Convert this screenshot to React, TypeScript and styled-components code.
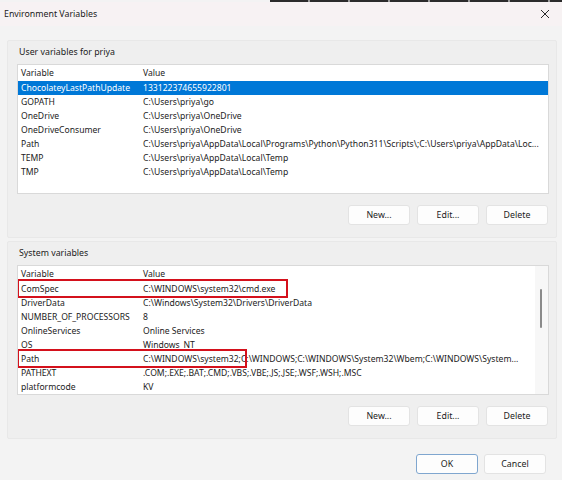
import React from "react";
import styled, {createGlobalStyle, css} from "styled-components";

const GlobalStyle = createGlobalStyle`
  html, body {
    margin: 0;
    padding: 0;
    background: #f3f3f3;
  }
  body {
    font-family: "Noto Sans", "Open Sans", sans-serif;
    font-size: 8.6px;
    color: #1b1b1b;
  }
`

const Window = styled.div`
  width: 562px;
  height: 480px;
  display: flex;
  flex-direction: column;
  background: #f3f3f3;
  overflow: hidden;
`

const TopStrip = styled.div`
  height: 2px;
  margin-left: 270px;
  background: repeating-linear-gradient(90deg, #2b2b2b 0 38px, #9a9a9a 38px 40px);
`

const TitleBar = styled.header`
  height: 24px;
  display: flex;
  flex-direction: row;
  justify-content: space-between;
  align-items: center;
  padding: 0 12px 0 4px;
  background: #f7f2f3;
`

const Title = styled.span`
  font-size: 8.8px;
  color: #1a1a1a;
`

const Body = styled.div`
  display: flex;
  flex-direction: column;
  gap: 3px;
  padding: 14px 5px 0 7px;
`

const Group = styled.section`
  display: flex;
  flex-direction: column;
  padding: 4px 7px 12px 9px;
  background: #efefef;
  border: 1px solid #e8e8e8;
  border-radius: 2px;
`

const GroupLabel = styled.div`
  height: 14px;
  line-height: 14px;
  margin-left: 2px;
  margin-bottom: 5px;
  font-size: 8.8px;
`

const ListBox = styled.div`
  position: relative;
  height: 130px;
  box-sizing: border-box;
  background: #ffffff;
  border: 1px solid #d9d9d9;
  overflow: hidden;
`

const HeaderRow = styled.div`
  display: flex;
  height: 16px;
  align-items: center;
  padding-left: 3px;
`

const Row = styled.div<{ $selected?: boolean }>`
  display: flex;
  height: 14px;
  align-items: center;
  padding-left: 3px;
  white-space: nowrap;
  ${({$selected}) => $selected && css`
    background: #0078d7;
    color: #ffffff;
  `}
`

const NameCell = styled.span`
  width: 122px;
  flex-shrink: 0;
`

const ValueCell = styled.span`
  white-space: nowrap;
`

const ScrollTrack = styled.div`
  position: absolute;
  top: 0;
  right: 0;
  width: 13px;
  height: 100%;
  background: #f7f7f7;
`

const ScrollThumb = styled.div`
  position: absolute;
  top: 23px;
  left: 5px;
  width: 2px;
  height: 39px;
  border-radius: 1px;
  background: #8a8a8a;
`

const ButtonRow = styled.div`
  display: flex;
  justify-content: flex-end;
  gap: 7px;
  margin-top: 11px;
  padding-right: 1px;
`

const Button = styled.button<{ $primary?: boolean }>`
  width: 62px;
  height: 20px;
  padding: 0;
  font-family: inherit;
  font-size: 8.8px;
  color: #1b1b1b;
  background: #fdfdfd;
  border: 1px solid #e3e3e3;
  border-radius: 3px;
  ${({$primary}) => $primary && css`
    border: 1px solid #7fa6cf;
  `}
`

const Footer = styled.div`
  display: flex;
  justify-content: flex-end;
  gap: 6px;
  padding: 15px 16px 0 0;
`

const RedBox = styled.div<{ $width: number }>`
  position: absolute;
  top: -3px;
  left: -1px;
  height: 19px;
  box-sizing: border-box;
  border: 2.5px solid #d4111c;
  width: ${({$width}) => $width}px;
`

const RowWrap = styled.div`
  position: relative;
`

const CloseIcon = () => (
  <svg width="10" height="10" viewBox="0 0 10 10">
    <path d="M1 1 L9 9 M9 1 L1 9" stroke="#2a2a2a" strokeWidth="1" fill="none"/>
  </svg>
)

type Variable = {
  name: string
  value: string
  selected?: boolean
  markWidth?: number
}

const userVariables: Variable[] = [
  {name: "ChocolateyLastPathUpdate", value: "133122374655922801", selected: true},
  {name: "GOPATH", value: "C:\\Users\\priya\\go"},
  {name: "OneDrive", value: "C:\\Users\\priya\\OneDrive"},
  {name: "OneDriveConsumer", value: "C:\\Users\\priya\\OneDrive"},
  {name: "Path", value: "C:\\Users\\priya\\AppData\\Local\\Programs\\Python\\Python311\\Scripts\\;C:\\Users\\priya\\AppData\\Loc..."},
  {name: "TEMP", value: "C:\\Users\\priya\\AppData\\Local\\Temp"},
  {name: "TMP", value: "C:\\Users\\priya\\AppData\\Local\\Temp"},
]

const systemVariables: Variable[] = [
  {name: "ComSpec", value: "C:\\WINDOWS\\system32\\cmd.exe", markWidth: 271},
  {name: "DriverData", value: "C:\\Windows\\System32\\Drivers\\DriverData"},
  {name: "NUMBER_OF_PROCESSORS", value: "8"},
  {name: "OnlineServices", value: "Online Services"},
  {name: "OS", value: "Windows_NT"},
  {name: "Path", value: "C:\\WINDOWS\\system32;C:\\WINDOWS;C:\\WINDOWS\\System32\\Wbem;C:\\WINDOWS\\System...", markWidth: 230},
  {name: "PATHEXT", value: ".COM;.EXE;.BAT;.CMD;.VBS;.VBE;.JS;.JSE;.WSF;.WSH;.MSC"},
  {name: "platformcode", value: "KV"},
]

const VariableList = ({items, scroll}: { items: Variable[], scroll?: boolean }) => (
  <ListBox>
    <HeaderRow>
      <NameCell>Variable</NameCell>
      <ValueCell>Value</ValueCell>
    </HeaderRow>
    {items.map((item) => (
      <RowWrap key={item.name + item.value}>
        {item.markWidth && <RedBox $width={item.markWidth}/>}
        <Row $selected={item.selected}>
          <NameCell>{item.name}</NameCell>
          <ValueCell>{item.value}</ValueCell>
        </Row>
      </RowWrap>
    ))}
    {scroll &&
    <ScrollTrack>
      <ScrollThumb/>
    </ScrollTrack>
    }
  </ListBox>
)

const App = () => {
  return (
    <Window>
      <GlobalStyle/>
      <TopStrip/>
      <TitleBar>
        <Title>Environment Variables</Title>
        <CloseIcon/>
      </TitleBar>
      <Body>
        <Group>
          <GroupLabel>User variables for priya</GroupLabel>
          <VariableList items={userVariables}/>
          <ButtonRow>
            <Button>New...</Button>
            <Button>Edit...</Button>
            <Button>Delete</Button>
          </ButtonRow>
        </Group>
        <Group>
          <GroupLabel>System variables</GroupLabel>
          <VariableList items={systemVariables} scroll/>
          <ButtonRow>
            <Button>New...</Button>
            <Button>Edit...</Button>
            <Button>Delete</Button>
          </ButtonRow>
        </Group>
      </Body>
      <Footer>
        <Button $primary>OK</Button>
        <Button>Cancel</Button>
      </Footer>
    </Window>
  )
}

export default App;
